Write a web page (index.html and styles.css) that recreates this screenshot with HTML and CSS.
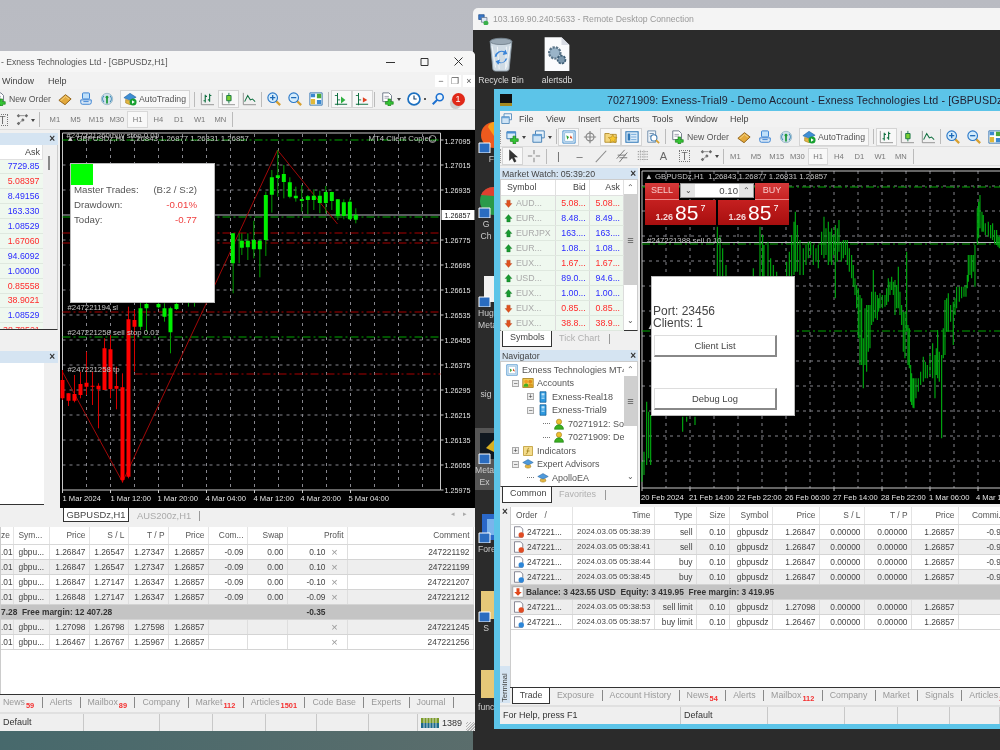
FILE: index.html
```html
<!DOCTYPE html>
<html lang="en">
<head>
    <meta charset="UTF-8">
    <title>MetaTrader copier on two desktops</title>
    <link rel="stylesheet" href="styles.css">
</head>
<body>
<svg class="sprite" xmlns="http://www.w3.org/2000/svg">
    <symbol id="i-new" viewBox="0 0 16 16"><path d="M1 2h10v8H1z" fill="#d8ecfa" stroke="#2a6fb0"/><path d="M1 2h10v2H1z" fill="#4a90d0"/><path d="M8 7h3v3h3v3h-3v3H8v-3H5v-3h3z" fill="#35c435" stroke="#127a12" stroke-width=".7"/></symbol>
    <symbol id="i-profile" viewBox="0 0 16 16"><path d="M4 1h10v8H4z" fill="#eef6fc" stroke="#3a78b0"/><path d="M1 5h10v9H1z" fill="#cfe4f6" stroke="#3a78b0"/><path d="M1 5h10v2H1z" fill="#6aa4d8"/></symbol>
    <symbol id="i-mw" viewBox="0 0 16 16"><path d="M1 1h14v14H1z" fill="#eaf4fc" stroke="#3a88c8"/><path d="M3 3h10v10H3z" fill="#fff" stroke="#8ab8dc"/><path d="M5 6l3 2-2 3z" fill="#2aa02a"/><path d="M10 6l2 4-3-1z" fill="#d24a20"/></symbol>
    <symbol id="i-cross" viewBox="0 0 16 16"><circle cx="8" cy="8" r="4.5" fill="none" stroke="#888" stroke-width="1.4"/><path d="M8 1v14M1 8h14" stroke="#888" stroke-width="1.4"/></symbol>
    <symbol id="i-star" viewBox="0 0 16 16"><path d="M1 4h5l1 1h7v9H1z" fill="#f4d67c" stroke="#b08a2a"/><path d="M10 5l1.500 3.200 3.500.4-2.600 2.400.7 3.500-3.100-1.800-3.100 1.800.7-3.500L5 8.600l3.500-.4z" fill="#f6c62e" stroke="#a67a10" stroke-width=".6"/></symbol>
    <symbol id="i-nav" viewBox="0 0 16 16"><path d="M1 2h14v12H1z" fill="#dcecf9" stroke="#2f78b8" stroke-width="1.200"/><path d="M3 4h3v8H3z" fill="#2f78b8"/><path d="M7 5h6M7 8h6M7 11h6" stroke="#6aa4d8"/></symbol>
    <symbol id="i-tester" viewBox="0 0 16 16"><path d="M2 1h9v13H2z" fill="#eef4fa" stroke="#6a8aa8"/><path d="M4 4h5M4 7h3" stroke="#6a8aa8"/><circle cx="9" cy="9" r="3.500" fill="#fff" stroke="#3a78b0" stroke-width="1.200"/><path d="M11.500 11.500 15 15" stroke="#d8a030" stroke-width="2"/></symbol>
    <symbol id="i-order" viewBox="0 0 16 16"><path d="M2 1h7l3 3v7H2z" fill="#fff" stroke="#667080"/><path d="M4 5h5M4 7h5" stroke="#99a"/><path d="M8 8h3v3h3v3h-3v2H8v-2H5v-3h3z" fill="#35c435" stroke="#127a12" stroke-width=".7"/></symbol>
    <symbol id="i-book" viewBox="0 0 16 16"><path d="M1 9.500 8.500 3 15 8l-7 6.500z" fill="#e3a93c" stroke="#8a5a10"/><path d="M3 10l5.500-5 4 3" fill="none" stroke="#f8dc90"/></symbol>
    <symbol id="i-person" viewBox="0 0 16 16"><rect x="4" y="1" width="8" height="7" rx="1" fill="#bfe0fa" stroke="#2a78d0"/><path d="M2 9h12v3a2 2 0 0 1-2 2H4a2 2 0 0 1-2-2z" fill="#dbe9f6" stroke="#2a78d0"/><path d="M5 11h6" stroke="#2a78d0"/></symbol>
    <symbol id="i-radio" viewBox="0 0 16 16"><circle cx="8" cy="8" r="6.500" fill="#cfe0ea" stroke="#9ab8c8"/><path d="M4.500 4.500a5 5 0 0 0 0 7M11.500 4.500a5 5 0 0 1 0 7" fill="none" stroke="#3a88b8" stroke-width="1.200"/><path d="M8 5v8" stroke="#1e9a3a" stroke-width="2"/><circle cx="8" cy="6" r="1.600" fill="#1e9a3a"/></symbol>
    <symbol id="i-hat" viewBox="0 0 16 16"><path d="M1 6.500 8 1.500l7 4.500-7 3.500z" fill="#3e8ed4" stroke="#1c5a94" stroke-width=".6"/><path d="M3 8.500v4l5 2 3-1v-5l-3 1.500z" fill="#e3b644" stroke="#9a7414" stroke-width=".6"/><circle cx="11.500" cy="11.500" r="4" fill="#18a030"/><path d="M10.300 9.500l3.200 2-3.200 2z" fill="#fff"/></symbol>
    <symbol id="i-bars" viewBox="0 0 16 16"><path d="M1.500 1v13.500H16" fill="none" stroke="#8a8a8a"/><path d="M6 3v9M4 10h2M6 5h2M11 2v9M9 9h2M11 4h2" fill="none" stroke="#107040" stroke-width="1.300"/></symbol>
    <symbol id="i-candle" viewBox="0 0 16 16"><path d="M1.500 1v13.500H16" fill="none" stroke="#8a8a8a"/><path d="M9 1v12" stroke="#107040"/><path d="M6.500 4h5v6h-5z" fill="#7bd030" stroke="#107040"/></symbol>
    <symbol id="i-line" viewBox="0 0 16 16"><path d="M1.500 1v13.500H16" fill="none" stroke="#8a8a8a"/><path d="M3 11 6.500 4l3 5 2.500-1 3 3" fill="none" stroke="#107040" stroke-width="1.200"/></symbol>
    <symbol id="i-zplus" viewBox="0 0 16 16"><path d="M10 10l5 5" stroke="#d8a030" stroke-width="2.600"/><circle cx="6.500" cy="6.500" r="5.500" fill="#d4ecfc" stroke="#2a78c8" stroke-width="1.300"/><path d="M3.500 6.500h6M6.500 3.500v6" stroke="#1e6ab8" stroke-width="1.500"/></symbol>
    <symbol id="i-zminus" viewBox="0 0 16 16"><path d="M10 10l5 5" stroke="#d8a030" stroke-width="2.600"/><circle cx="6.500" cy="6.500" r="5.500" fill="#d4ecfc" stroke="#2a78c8" stroke-width="1.300"/><path d="M3.500 6.500h6" stroke="#1e6ab8" stroke-width="1.500"/></symbol>
    <symbol id="i-grid" viewBox="0 0 16 16"><path d="M1 1h14v14H1z" fill="#fff" stroke="#2a6fb0"/><path d="M2 2h5v4H2zM9 9h5v5H9z" fill="#3a88d0"/><path d="M9 2h5v5H9z" fill="#4aa838"/><path d="M2 8h5v6H2z" fill="#e0b83a"/></symbol>
    <symbol id="i-shift" viewBox="0 0 16 16"><path d="M4 1v14M1 14h14" stroke="#107040" stroke-width="1.200"/><path d="M1 4h3M4 9h3" stroke="#107040"/><path d="M8 5l5 4-5 4z" fill="#30b040"/></symbol>
    <symbol id="i-scroll" viewBox="0 0 16 16"><path d="M4 1v14M1 14h14" stroke="#107040" stroke-width="1.200"/><path d="M1 4h3M4 9h3" stroke="#107040"/><path d="M9 6l5 3-5 3z" fill="#e04020"/></symbol>
    <symbol id="i-clock" viewBox="0 0 16 16"><circle cx="8" cy="8" r="6.800" fill="#fff" stroke="#1c70c0" stroke-width="2"/><path d="M8 4v4h3" fill="none" stroke="#14406c" stroke-width="1.300"/></symbol>
    <symbol id="i-mag" viewBox="0 0 16 16"><circle cx="10" cy="6" r="4" fill="#eaf4fc" stroke="#1c70d0" stroke-width="1.800"/><path d="M7 9l-5 5" stroke="#1c70d0" stroke-width="2.400"/></symbol>
    <symbol id="i-tools" viewBox="0 0 16 16"><path d="M2 3l2-2 2 2-2 2zM11 3l2-2 2 2-2 2zM7 8l2-2 2 2-2 2zM2 12l2-2 2 2-2 2z" fill="#666"/><path d="M4 3h7M4 12l5-4" stroke="#888"/></symbol>
    <symbol id="i-arrow" viewBox="0 0 16 16"><path d="M4 1v12l3-3 2.500 5 2-1-2.500-4.800h4z" fill="#333" stroke="#111" stroke-width=".5"/></symbol>
    <symbol id="i-plus" viewBox="0 0 16 16"><path d="M8 1v5M8 10v5M1 8h5M10 8h5" stroke="#888" stroke-width="1.200"/></symbol>
    <symbol id="i-trend" viewBox="0 0 16 16"><path d="M2 15 14 2" stroke="#8a8a8a" stroke-width="1.200"/></symbol>
    <symbol id="i-chan" viewBox="0 0 16 16"><path d="M2 11 11 1M5 15l9-11M3 7h9M5 10h9" stroke="#777" stroke-width="1.100"/></symbol>
    <symbol id="i-fib" viewBox="0 0 16 16"><path d="M2 3h12M2 6h12M2 9h12M2 12h12" stroke="#888" stroke-dasharray="1.500 1"/><path d="M5 1v13M9 1v13" stroke="#bbb" stroke-dasharray="1.500 1"/></symbol>
    <symbol id="i-acct" viewBox="0 0 16 16"><path d="M1 2h14v12H1z" fill="#f0c850" stroke="#a07810"/><circle cx="5.500" cy="6" r="2.500" fill="#f2a020"/><path d="M2 13c0-6 7-6 7 0z" fill="#42b020"/><circle cx="11" cy="6" r="2.500" fill="#e08a18"/><path d="M8 13c0-6 7-6 7 0z" fill="#d89a20"/></symbol>
    <symbol id="i-server" viewBox="0 0 16 16"><path d="M4 1h8v14H4z" fill="#2f9ae0" stroke="#145e94"/><path d="M6 3h4v3H6z" fill="#bfe4fa"/><path d="M6 8h4M6 10h4" stroke="#bfe4fa"/></symbol>
    <symbol id="i-user" viewBox="0 0 16 16"><circle cx="8" cy="5" r="3.500" fill="#f0c030" stroke="#a07810" stroke-width=".8"/><path d="M2 15c0-8 12-8 12 0z" fill="#3cb020" stroke="#157a10" stroke-width=".8"/></symbol>
    <symbol id="i-indi" viewBox="0 0 16 16"><path d="M2 2h12v12H2z" fill="#f4dc8c" stroke="#b8942a"/><path d="M9.500 4c-2 0-1.500 2-2 4s0 4-2.500 4M6 8h4" fill="none" stroke="#9a7a14"/></symbol>
    <symbol id="i-ea" viewBox="0 0 16 16"><path d="M1 6 8 2l7 4-7 3.500z" fill="#4f9adc" stroke="#1c5a94" stroke-width=".6"/><path d="M5 9c2 1 4 1 6 0l1 3c-2 2-6 2-8 0z" fill="#e3b644" stroke="#9a7414" stroke-width=".6"/></symbol>
    <symbol id="i-sell" viewBox="0 0 16 16"><path d="M2 1h8l3 3v11H2z" fill="#fff" stroke="#667"/><circle cx="11" cy="12" r="3.600" fill="#e04c24"/></symbol>
    <symbol id="i-buy" viewBox="0 0 16 16"><path d="M2 1h8l3 3v11H2z" fill="#fff" stroke="#667"/><circle cx="11" cy="12" r="3.600" fill="#2c86d8"/></symbol>
    <symbol id="i-bal" viewBox="0 0 16 16"><path d="M1 1h14v14H1z" fill="#fff" stroke="#999"/><path d="M6 3h4v5h3l-5 5-5-5h3z" fill="#e0481c"/></symbol>
    <symbol id="i-up" viewBox="0 0 16 16"><path d="M8 1l6 7h-3v6H5V8H2z" fill="#189a30" stroke="#0b6a1c" stroke-width=".6"/></symbol>
    <symbol id="i-down" viewBox="0 0 16 16"><path d="M8 15l6-7h-3V2H5v6H2z" fill="#e0521e" stroke="#a83410" stroke-width=".6"/></symbol>
    <symbol id="i-bin" viewBox="0 0 32 40"><path d="M4 6h24l-3 31a3 3 0 0 1-3 2H10a3 3 0 0 1-3-2z" fill="#cfdbe4" stroke="#8a98a4"/><ellipse cx="16" cy="6" rx="12" ry="3.500" fill="#9aa9b5" stroke="#75838e"/><path d="M6 11l4 24M12 12l2 25M22 12l-1 25M26 11l-4 24" stroke="#eef3f6" stroke-width="1.200"/><path d="M11 23a6 6 0 0 1 8-5l-1 3 5-1-2-5-1 2a8 8 0 0 0-11 6zM21 25a5 5 0 0 1-7 4l1-3-5 2 3 4 1-2a8 8 0 0 0 9-5z" fill="#3a84d8"/></symbol>
    <symbol id="i-doc" viewBox="0 0 24 32"><path d="M1 1h15l7 7v23H1z" fill="#fafbfd"/><path d="M16 1v7h7z" fill="#d8dce4"/><circle cx="10" cy="15" r="5" fill="#9ab4c8" stroke="#5a7488" stroke-width="2" stroke-dasharray="2 1"/><circle cx="16" cy="21" r="3.500" fill="#7c98ae" stroke="#3c5c74" stroke-width="1.500" stroke-dasharray="2 1"/></symbol>
</svg>

<div class="desktop">

    <!-- remote desktop window, behind the local terminal -->
    <section class="rdp">
        <div class="rdp-title">
            <svg class="rdp-logo" viewBox="0 0 16 16"><path d="M1 1h8v7H1z" fill="#3a78c8" stroke="#1c4a88"/><path d="M5 5h8v7H5z" fill="#dbe6f4" stroke="#5a6a80"/><path d="M8 12a4 4 0 0 1 7 0 3 3 0 0 1-7 2z" fill="#3ab04a"/></svg>
            <span>103.169.90.240:5633 - Remote Desktop Connection</span>
        </div>
        <div class="rdp-screen">
            <div class="icon icon-bin"><svg class="i32"><use href="#i-bin"/></svg><span>Recycle Bin</span></div>
            <div class="icon icon-alerts"><svg class="i32"><use href="#i-doc"/></svg><span>alertsdb</span></div>

            <div class="cut cut-fox"><svg viewBox="0 0 16 32"><circle cx="16" cy="14" r="13" fill="#ee5a1e"/><path d="M10 6c2-5 6-5 6-5v14z" fill="#f9a11b"/><path class="sc" d="M1 22h11v10H1z"/></svg><span>F</span></div>
            <div class="cut cut-chrome"><svg viewBox="0 0 16 32"><circle cx="16" cy="15" r="14" fill="#2a9a4a"/><path d="M3 9A14 14 0 0 1 16 1v9z" fill="#e04030"/><path class="sc" d="M1 22h11v10H1z"/></svg><span>G<br>Ch</span></div>
            <div class="cut cut-hug"><svg viewBox="0 0 16 32"><path d="M6 1h10v26H6z" fill="#f2f2f2"/><path class="sc" d="M1 22h11v10H1z"/></svg><span>Hug<br>Meta</span></div>
            <div class="cut cut-sig"><span>sig</span></div>
            <div class="cut cut-meta"><svg viewBox="0 0 16 32"><path d="M2 1h14v26H2z" fill="#101820"/><path d="M8 16l8-8v12z" fill="#d8b020"/><path class="sc" d="M1 22h11v10H1z"/></svg><span>Meta<br>Ex</span></div>
            <div class="cut cut-fore"><svg viewBox="0 0 16 32"><path d="M4 3h12v26H4z" fill="#2a68c8"/><path d="M9 8h7v16H9z" fill="#7ab4ec"/><path class="sc" d="M1 22h11v10H1z"/></svg><span>Fore</span></div>
            <div class="cut cut-s"><svg viewBox="0 0 16 32"><path d="M3 1h13v28H3z" fill="#e6c878"/><path class="sc" d="M1 22h11v10H1z"/></svg><span>S</span></div>
            <div class="cut cut-func"><svg viewBox="0 0 16 32"><path d="M3 1h13v28H3z" fill="#e6c878"/></svg><span>func</span></div>

            <!-- demo account terminal -->
            <div class="mt4">
                <div class="mt4-title">
                    <span class="mt4-logo"></span>
                    <span class="mt4-caption">70271909: Exness-Trial9 - Demo Account - Exness Technologies Ltd - [GBPUSDz</span>
                </div>
                <div class="mt4-inner">
                    <div class="menubar menubar-r">
                        <svg class="i16 menu-ico"><use href="#i-profile"/></svg>
                        <a class="m-file">File</a><a class="m-next">View</a><a class="m-next">Insert</a><a class="m-next">Charts</a><a class="m-next">Tools</a><a class="m-next">Window</a><a class="m-next">Help</a>
                    </div>
                    <div class="toolbar tb-r1">
                        <i class="grip"></i>
                        <b class="btn wide"><svg class="i14"><use href="#i-new"/></svg><em class="dd"></em></b>
                        <b class="btn wide"><svg class="i14"><use href="#i-profile"/></svg><em class="dd"></em></b>
                        <i class="sep"></i>
                        <b class="btn on"><svg class="i14"><use href="#i-mw"/></svg></b>
                        <b class="btn"><svg class="i14"><use href="#i-cross"/></svg></b>
                        <b class="btn on"><svg class="i14"><use href="#i-star"/></svg></b>
                        <b class="btn on"><svg class="i14"><use href="#i-nav"/></svg></b>
                        <b class="btn"><svg class="i14"><use href="#i-tester"/></svg></b>
                        <i class="sep"></i>
                        <b class="btn text neworder"><svg class="i14"><use href="#i-order"/></svg>New Order</b>
                        <b class="btn"><svg class="i14"><use href="#i-book"/></svg></b>
                        <b class="btn"><svg class="i14"><use href="#i-person"/></svg></b>
                        <b class="btn"><svg class="i14"><use href="#i-radio"/></svg></b>
                        <b class="btn text auto on"><svg class="i14"><use href="#i-hat"/></svg>AutoTrading</b>
                        <i class="sep"></i>
                        <b class="btn on"><svg class="i14"><use href="#i-bars"/></svg></b>
                        <b class="btn"><svg class="i14"><use href="#i-candle"/></svg></b>
                        <b class="btn"><svg class="i14"><use href="#i-line"/></svg></b>
                        <i class="sep"></i>
                        <b class="btn"><svg class="i14"><use href="#i-zplus"/></svg></b>
                        <b class="btn"><svg class="i14"><use href="#i-zminus"/></svg></b>
                        <b class="btn"><svg class="i14"><use href="#i-grid"/></svg></b>
                    </div>
                    <div class="toolbar tb-r2">
                        <i class="grip"></i>
                        <b class="btn on"><svg class="i14"><use href="#i-arrow"/></svg></b>
                        <b class="btn"><svg class="i14"><use href="#i-plus"/></svg></b>
                        <i class="sep"></i>
                        <b class="btn glyph">|</b>
                        <b class="btn glyph">&ndash;</b>
                        <b class="btn"><svg class="i14"><use href="#i-trend"/></svg></b>
                        <b class="btn"><svg class="i14"><use href="#i-chan"/></svg></b>
                        <b class="btn"><svg class="i14"><use href="#i-fib"/></svg></b>
                        <b class="btn glyph">A</b>
                        <b class="btn glyph boxed"><span>T</span></b>
                        <b class="btn wide"><svg class="i14"><use href="#i-tools"/></svg><em class="dd"></em></b>
                        <i class="sep"></i>
                        <span class="tf">M1</span><span class="tf">M5</span><span class="tf">M15</span><span class="tf">M30</span><span class="tf on">H1</span><span class="tf">H4</span><span class="tf">D1</span><span class="tf">W1</span><span class="tf">MN</span>
                        <i class="sep"></i>
                    </div>

                    <div class="mt4-main">
                        <aside class="side-r">
                            <div class="panel mw-r">
                                <div class="panel-head">Market Watch: 05:39:20<span class="close">&times;</span></div>
                                <div class="mw-body">
                                    <table class="mw-table">
                                        <tr><th class="c-sym">Symbol</th><th>Bid</th><th>Ask</th></tr>
                                        <tr class="dn"><td class="c-sym"><svg class="i8"><use href="#i-down"/></svg>AUD...</td><td>5.08...</td><td>5.08...</td></tr>
                                        <tr class="up"><td class="c-sym"><svg class="i8"><use href="#i-up"/></svg>EUR...</td><td>8.48...</td><td>8.49...</td></tr>
                                        <tr class="up"><td class="c-sym"><svg class="i8"><use href="#i-up"/></svg>EURJPX</td><td>163....</td><td>163....</td></tr>
                                        <tr class="up"><td class="c-sym"><svg class="i8"><use href="#i-up"/></svg>EUR...</td><td>1.08...</td><td>1.08...</td></tr>
                                        <tr class="dn"><td class="c-sym"><svg class="i8"><use href="#i-down"/></svg>EUX...</td><td>1.67...</td><td>1.67...</td></tr>
                                        <tr class="up"><td class="c-sym"><svg class="i8"><use href="#i-up"/></svg>USD...</td><td>89.0...</td><td>94.6...</td></tr>
                                        <tr class="up"><td class="c-sym"><svg class="i8"><use href="#i-up"/></svg>EUX...</td><td>1.00...</td><td>1.00...</td></tr>
                                        <tr class="dn"><td class="c-sym"><svg class="i8"><use href="#i-down"/></svg>EUX...</td><td>0.85...</td><td>0.85...</td></tr>
                                        <tr class="dn"><td class="c-sym"><svg class="i8"><use href="#i-down"/></svg>EUX...</td><td>38.8...</td><td>38.9...</td></tr>
                                    </table>
                                    <div class="vscroll mw-scroll"><u class="arr">&#8963;</u><u class="thumb">&equiv;</u><u class="arr arr-d">&#8964;</u></div>
                                </div>
                                <div class="subtabs"><span class="subtab active">Symbols</span><span class="subtab">Tick Chart</span><i class="vbar"></i></div>
                            </div>
                            <div class="panel nav-r">
                                <div class="panel-head">Navigator<span class="close">&times;</span></div>
                                <div class="nav-body">
                                    <div class="tree">
                                        <div class="node lv0"><svg class="i12"><use href="#i-mw"/></svg>Exness Technologies MT4</div>
                                        <div class="node lv1"><i class="exp">&minus;</i><svg class="i12"><use href="#i-acct"/></svg>Accounts</div>
                                        <div class="node lv2"><i class="exp">+</i><svg class="i12"><use href="#i-server"/></svg>Exness-Real18</div>
                                        <div class="node lv2"><i class="exp">&minus;</i><svg class="i12"><use href="#i-server"/></svg>Exness-Trial9</div>
                                        <div class="node lv3"><i class="dash"></i><svg class="i12"><use href="#i-user"/></svg>70271912: Sou</div>
                                        <div class="node lv3"><i class="dash"></i><svg class="i12"><use href="#i-user"/></svg>70271909: Des</div>
                                        <div class="node lv1"><i class="exp">+</i><svg class="i12"><use href="#i-indi"/></svg>Indicators</div>
                                        <div class="node lv1"><i class="exp">&minus;</i><svg class="i12"><use href="#i-ea"/></svg>Expert Advisors</div>
                                        <div class="node lv2"><i class="dash"></i><svg class="i12"><use href="#i-ea"/></svg>ApolloEA</div>
                                    </div>
                                    <div class="vscroll nav-scroll"><u class="arr">&#8963;</u><u class="thumb">&equiv;</u><u class="arr arr-d">&#8964;</u></div>
                                </div>
                                <div class="subtabs"><span class="subtab active">Common</span><span class="subtab">Favorites</span><i class="vbar"></i></div>
                            </div>
                        </aside>

                        <div class="chart chart-r">
                            <svg class="plot" viewBox="640 168 360 336">
                                <path class="grid" d="M666 171V488M690 171V488M714 171V488M738 171V488M762 171V488M786 171V488M810 171V488M834 171V488M858 171V488M882 171V488M906 171V488M930 171V488M954 171V488M978 171V488M642 186H1000M642 211H1000M642 236H1000M642 261H1000M642 286H1000M642 311H1000M642 336H1000M642 361H1000M642 386H1000M642 411H1000M642 436H1000M642 461H1000"/>
                                <path class="frame" d="M642 171V488H1000M642 171H1000M642 488V491M690 488V491M738 488V491M786 488V491M834 488V491M882 488V491M930 488V491M978 488V491"/>
                                <path class="level lv-green" d="M642 187H1000M642 331H1000M642 244H1000"/>
                                <path class="level-bid" d="M642 242.500H1000"/>
                                <g transform="translate(640 165) scale(.3333)">
                                    <path class="hl" d="M6 890V950M12 860V930M20 710V900M26 740V880M32 750V900M128 755V800M140 755V770M165 755V780M232 185V340M240 215V340M248 250V340M258 300V340M340 310V340M360 185V340M368 210V340M372 240V340M384 230V340M392 280V340M400 300V340M410 320V340M440 290V340M448 260V340M455 210V340M462 170V330M466 140V320M472 180V320M480 225V330M490 250V330M498 240V300M505 230V280M512 230V270M520 240V300M528 250V290M535 240V310M545 200V270M552 155V280M558 190V270M565 170V300M570 200V290M575 190V300M581 210V270M586 180V400M592 190V290M597 165V260M604 230V290M610 225V280M616 225V270M622 225V300M628 250V320M635 270V340M640 300V365M645 340V390M650 360V430M655 370V520M660 390V600M665 400V600M670 520V670M675 430V600M680 420V620M685 420V560M690 420V550M695 380V480M700 315V470M706 380V460M712 390V465M716 400V440M720 385V430M727 390V430M735 390V425M740 370V420M745 340V410M750 350V390M755 335V375M760 350V390M765 345V450M770 360V430M775 305V430M780 380V450M785 420V480M790 440V560M795 440V580M800 260V500M804 480V600M808 490V610M812 600V710M815 625V720M819 640V728M822 640V730M828 640V700M835 640V680M842 620V660M850 575V650M856 590V640M862 600V640M870 570V630M878 535V640M885 570V700M889 550V630M893 495V640M898 560V650M905 570V820M910 490V580M915 405V570M920 400V500M925 385V500M932 420V470M940 410V540M945 400V450M950 365V430M958 365V410M965 365V400M972 365V395M978 360V395M982 330V370M985 270V350M990 270V330M995 270V340M1000 270V320M1005 240V365M1012 130V240M1016 110V220M1020 90V190M1026 140V200M1030 150V200M1036 175V210M1045 170V215M1052 180V220M1058 175V225M1064 195V235M1070 195V240M1074 210V245M1078 215V250"/>
                                </g>
                                <text class="t-label" x="645" y="179">&#9650; GBPUSDz,H1  1.26843 1.26877 1.26831 1.26857</text>
                                <text class="t-label" x="647" y="243">#247221388 sell 0.10</text>
                                <text class="t-label" x="647" y="329">&#9650;</text>
                                <g class="t-axis">
                                    <text x="641" y="500">20 Feb 2024</text>
                                    <text x="689" y="500">21 Feb 14:00</text>
                                    <text x="737" y="500">22 Feb 22:00</text>
                                    <text x="785" y="500">26 Feb 06:00</text>
                                    <text x="833" y="500">27 Feb 14:00</text>
                                    <text x="881" y="500">28 Feb 22:00</text>
                                    <text x="929" y="500">1 Mar 06:00</text>
                                    <text x="976" y="500">4 Mar 1</text>
                                </g>
                            </svg>

                            <div class="oneclick">
                                <div class="oc-top">
                                    <span class="oc-side">SELL</span>
                                    <span class="oc-lot"><i class="oc-step">&#8964;</i><span class="oc-val">0.10</span><i class="oc-step">&#8963;</i></span>
                                    <span class="oc-side">BUY</span>
                                </div>
                                <div class="oc-prices">
                                    <span class="oc-price"><small>1.26</small><strong>85</strong><sup>7</sup></span>
                                    <span class="oc-price"><small>1.26</small><strong>85</strong><sup>7</sup></span>
                                </div>
                            </div>

                            <div class="copier">
                                <div class="copier-info">Port: 23456<br>Clients: 1</div>
                                <div class="win-btn">Client List</div>
                                <div class="win-btn win-btn-2">Debug Log</div>
                            </div>
                        </div>
                    </div>

                    <div class="terminal term-r">
                        <div class="term-strip"><span class="close">&times;</span><span class="term-name">Terminal</span></div>
                        <div class="term-main">
                            <div class="grid-wrap">
                                <table class="trades trades-r">
                                    <thead><tr><th class="order">Order &nbsp;&nbsp;/</th><th>Time</th><th>Type</th><th>Size</th><th>Symbol</th><th>Price</th><th>S / L</th><th>T / P</th><th>Price</th><th>Commi...</th></tr></thead>
                                    <tbody>
                                        <tr><td class="order"><svg class="i12"><use href="#i-sell"/></svg>247221...</td><td>2024.03.05 05:38:39</td><td>sell</td><td>0.10</td><td>gbpusdz</td><td>1.26847</td><td>0.00000</td><td>0.00000</td><td>1.26857</td><td>-0.90</td></tr>
                                        <tr class="alt"><td class="order"><svg class="i12"><use href="#i-sell"/></svg>247221...</td><td>2024.03.05 05:38:41</td><td>sell</td><td>0.10</td><td>gbpusdz</td><td>1.26847</td><td>0.00000</td><td>0.00000</td><td>1.26857</td><td>-0.90</td></tr>
                                        <tr><td class="order"><svg class="i12"><use href="#i-buy"/></svg>247221...</td><td>2024.03.05 05:38:44</td><td>buy</td><td>0.10</td><td>gbpusdz</td><td>1.26847</td><td>0.00000</td><td>0.00000</td><td>1.26857</td><td>-0.90</td></tr>
                                        <tr class="alt"><td class="order"><svg class="i12"><use href="#i-buy"/></svg>247221...</td><td>2024.03.05 05:38:45</td><td>buy</td><td>0.10</td><td>gbpusdz</td><td>1.26847</td><td>0.00000</td><td>0.00000</td><td>1.26857</td><td>-0.90</td></tr>
                                        <tr class="total"><td colspan="10"><svg class="i12"><use href="#i-bal"/></svg>Balance: 3 423.55 USD&nbsp; Equity: 3 419.95&nbsp; Free margin: 3 419.95</td></tr>
                                        <tr class="alt"><td class="order"><svg class="i12"><use href="#i-sell"/></svg>247221...</td><td>2024.03.05 05:38:53</td><td>sell limit</td><td>0.10</td><td>gbpusdz</td><td>1.27098</td><td>0.00000</td><td>0.00000</td><td>1.26857</td><td></td></tr>
                                        <tr><td class="order"><svg class="i12"><use href="#i-buy"/></svg>247221...</td><td>2024.03.05 05:38:57</td><td>buy limit</td><td>0.10</td><td>gbpusdz</td><td>1.26467</td><td>0.00000</td><td>0.00000</td><td>1.26857</td><td></td></tr>
                                    </tbody>
                                </table>
                            </div>
                            <div class="tabs tabs-r">
                                <span class="tab active">Trade</span><span class="tab">Exposure</span><span class="tab">Account History</span><span class="tab">News<sub>54</sub></span><span class="tab">Alerts</span><span class="tab">Mailbox<sub>112</sub></span><span class="tab">Company</span><span class="tab">Market</span><span class="tab">Signals</span><span class="tab">Articles<sub>2</sub></span>
                            </div>
                        </div>
                    </div>

                    <div class="status status-r">
                        <span>For Help, press F1</span><span>Default</span><span></span><span></span><span></span><span></span>
                    </div>
                </div>
            </div>
        </div>
    </section>

    <!-- local terminal, cut by the left edge of the screen -->
    <section class="local">
        <div class="local-title">
            <span>- Exness Technologies Ltd - [GBPUSDz,H1]</span>
            <span class="caps">
                <svg viewBox="0 0 12 12"><path d="M1 6.500h9"/></svg>
                <svg viewBox="0 0 12 12"><path d="M2 2.500h7v7H2z"/></svg>
                <svg viewBox="0 0 12 12"><path d="M1.500 1.500l8 8M9.500 1.500l-8 8"/></svg>
            </span>
        </div>
        <div class="menubar menubar-l">
            <a>Window</a><a>Help</a>
            <span class="mdi"><u>&minus;</u><u>&#10064;</u><u>&times;</u></span>
        </div>
        <div class="toolbar tb-l1">
            <svg class="i14 order-cut"><use href="#i-order"/></svg>
            <b class="btn text neworder-l">New Order</b>
            <b class="btn"><svg class="i14"><use href="#i-book"/></svg></b>
            <b class="btn"><svg class="i14"><use href="#i-person"/></svg></b>
            <b class="btn"><svg class="i14"><use href="#i-radio"/></svg></b>
            <b class="btn text auto on"><svg class="i14"><use href="#i-hat"/></svg>AutoTrading</b>
            <i class="sep"></i>
            <b class="btn"><svg class="i14"><use href="#i-bars"/></svg></b>
            <b class="btn on"><svg class="i14"><use href="#i-candle"/></svg></b>
            <b class="btn"><svg class="i14"><use href="#i-line"/></svg></b>
            <i class="sep"></i>
            <b class="btn"><svg class="i14"><use href="#i-zplus"/></svg></b>
            <b class="btn"><svg class="i14"><use href="#i-zminus"/></svg></b>
            <b class="btn"><svg class="i14"><use href="#i-grid"/></svg></b>
            <i class="sep"></i>
            <b class="btn on"><svg class="i14"><use href="#i-shift"/></svg></b>
            <b class="btn on"><svg class="i14"><use href="#i-scroll"/></svg></b>
            <i class="sep"></i>
            <b class="btn wide"><svg class="i14"><use href="#i-order"/></svg><em class="dd"></em></b>
            <b class="btn wide"><svg class="i14"><use href="#i-clock"/></svg><em class="dot"></em></b>
            <b class="btn narrow"><svg class="i14"><use href="#i-mag"/></svg></b>
            <span class="notify">1</span>
        </div>
        <div class="toolbar tb-l2">
            <b class="btn glyph boxed cut-t"><span>T</span></b>
            <b class="btn wide"><svg class="i14"><use href="#i-tools"/></svg><em class="dd"></em></b>
            <i class="sep"></i>
            <span class="tf">M1</span><span class="tf">M5</span><span class="tf">M15</span><span class="tf">M30</span><span class="tf on">H1</span><span class="tf">H4</span><span class="tf">D1</span><span class="tf">W1</span><span class="tf">MN</span>
            <i class="sep"></i>
        </div>

        <div class="local-main">
            <aside class="side-l">
                <div class="panel mw-l">
                    <div class="panel-head"><span class="close">&times;</span></div>
                    <div class="mw-body">
                        <table class="mw-table mw-table-l">
                            <tr><th>Ask</th></tr>
                            <tr class="up"><td>7729.85</td></tr>
                            <tr class="dn"><td>5.08397</td></tr>
                            <tr class="up"><td>8.49156</td></tr>
                            <tr class="up"><td>163.330</td></tr>
                            <tr class="up"><td>1.08529</td></tr>
                            <tr class="dn"><td>1.67060</td></tr>
                            <tr class="up"><td>94.6092</td></tr>
                            <tr class="up"><td>1.00000</td></tr>
                            <tr class="dn"><td>0.85558</td></tr>
                            <tr class="dn"><td>38.9021</td></tr>
                            <tr class="up"><td>1.08529</td></tr>
                            <tr class="dn"><td>38.78521</td></tr>
                        </table>
                        <i class="thumb-l"></i>
                    </div>
                </div>
                <div class="panel nav-l">
                    <div class="panel-head"><span class="close">&times;</span></div>
                    <div class="nav-body-l"></div>
                </div>
            </aside>

            <div class="chart-col">
                <div class="chart chart-l">
                    <svg class="plot" viewBox="60 130 414 378">
                        <path class="grid" d="M86 134V490M110 134V490M134 134V490M158 134V490M182 134V490M206 134V490M230 134V490M254 134V490M278 134V490M302 134V490M326 134V490M350 134V490M374 134V490M398 134V490M422 134V490M62 165H440M62 190H440M62 240H440M62 265H440M62 290H440M62 315H440M62 340H440M62 365H440M62 390H440M62 415H440M62 440H440M62 465H440"/>
                        <path class="frame" d="M440 133V490H62V133H440M440 140H443M440 165H443M440 190H443M440 240H443M440 265H443M440 290H443M440 315H443M440 340H443M440 365H443M440 390H443M440 415H443M440 440H443M440 465H443M440 490H443M62 490V493M110 490V493M158 490V493M206 490V493M254 490V493M302 490V493M350 490V493"/>
                        <path class="level lv-green" d="M62 140H440M62 217H440M62 337H440"/>
                        <path class="level lv-red" d="M62 233H440M62 243H440M62 312H440M134 374H440"/>
                        <path class="level-bid" d="M62 215H440"/>
                        <path class="zigzag" d="M62 372 122 482 205 305 277 150 337 224"/>
                        <g transform="translate(60 290) scale(.3333)">
                            <path class="wick-r" d="M6 240V330M24 310V348M42 255V337M60 245V325M78 185V315M96 245V345M114 280V415M132 145V300M150 135V325M168 230V358M186 250V578M204 50V565M222 60V245"/>
                            <path class="body-r" d="M6 270V325M24 310V332M42 312V332M60 282V315M78 278V290M96 287V290M114 287V298M132 175V300M150 178V297M168 288V296M186 292V570M204 88V560M222 90V110"/>
                            <path class="wick-g" d="M240 20V120M258 30V125M294 30V55M312 40V95M330 50V190M348 30V60M384 30V50M402 30V50"/>
                            <path class="body-g" d="M240 55V110M258 42V55M294 42V52M312 55V80M330 55V127M348 42V57"/>
                        </g>
                        <g transform="translate(240 130) scale(.3333)">
                            <path class="wick-g" d="M-22 310V490M-4 310V400M4 310V375M22 310V390M40 272V385M58 330V442M76 185V378M94 120V248M112 60V200M130 105V205M148 142V205M166 170V215M184 165V245M202 195V253M220 178V240M238 182V250M256 168V250M274 185V240M292 207V270M310 208V268M328 206V270M346 235V280"/>
                            <path class="body-g" d="M-23 310V400M4 332V353M22 332V352M40 330V358M58 332V358M76 195V330M94 142V194M112 136V144M130 132V156M148 157V200M166 197V205M184 207V213M202 199V210M220 197V210M238 197V219M256 186V219M274 186V213M292 208V258M310 217V258M328 215V268M346 254V269"/>
                        </g>
                        <text class="t-label" x="66" y="138">#247221260 buy stop 0.01</text>
                        <text class="t-label" x="66" y="141">&#9650; GBPUSDz,H1  1.26843 1.26877 1.26831 1.26857</text>
                        <text class="t-label" x="368" y="141">MT4 Client Copier</text>
                        <text class="t-label" x="67" y="310">#247221194 sl</text>
                        <text class="t-label" x="67" y="335">#247221258 sell stop 0.01</text>
                        <text class="t-label" x="67" y="372">#247221258 tp</text>
                        <circle class="smile" cx="432" cy="139" r="3.500"/>
                        <path class="smile" d="M430 140a2.200 2.200 0 0 0 4 0"/>
                        <g class="t-price">
                            <text x="444" y="144">1.27095</text>
                            <text x="444" y="168">1.27015</text>
                            <text x="444" y="193">1.26935</text>
                            <text x="444" y="243">1.26775</text>
                            <text x="444" y="268">1.26695</text>
                            <text x="444" y="293">1.26615</text>
                            <text x="444" y="318">1.26535</text>
                            <text x="444" y="343">1.26455</text>
                            <text x="444" y="368">1.26375</text>
                            <text x="444" y="393">1.26295</text>
                            <text x="444" y="418">1.26215</text>
                            <text x="444" y="443">1.26135</text>
                            <text x="444" y="468">1.26055</text>
                            <text x="444" y="493">1.25975</text>
                        </g>
                        <g class="t-axis">
                            <text x="62" y="501">1 Mar 2024</text>
                            <text x="110" y="501">1 Mar 12:00</text>
                            <text x="157" y="501">1 Mar 20:00</text>
                            <text x="205" y="501">4 Mar 04:00</text>
                            <text x="253" y="501">4 Mar 12:00</text>
                            <text x="300" y="501">4 Mar 20:00</text>
                            <text x="348" y="501">5 Mar 04:00</text>
                        </g>
                        <path class="bid-tag" d="M441 210h33v10h-33z"/>
                        <text class="t-bid" x="444" y="218">1.26857</text>
                    </svg>
                    <div class="drawdown">
                        <span class="flag"></span>
                        <div class="dd-grid">
                            <span>Master Trades:</span><span>(B:2 / S:2)</span>
                            <span>Drawdown:</span><span class="neg">-0.01%</span>
                            <span>Today:</span><span class="neg">-0.77</span>
                        </div>
                    </div>
                </div>
                <div class="chart-tabs">
                    <span class="ctab active">GBPUSDz,H1</span><span class="ctab">AUS200z,H1</span><i class="vbar"></i>
                    <span class="ctab-arrows"><u>&#9666;</u><u>&#9656;</u></span>
                </div>
            </div>
        </div>

        <div class="terminal term-l">
            <div class="grid-wrap">
                <table class="trades trades-l">
                    <thead><tr><th>ze</th><th class="lft">Sym...</th><th>Price</th><th>S / L</th><th>T / P</th><th>Price</th><th>Com...</th><th>Swap</th><th>Profit</th><th>Comment</th></tr></thead>
                    <tbody>
                        <tr><td>.01</td><td class="lft">gbpu...</td><td>1.26847</td><td>1.26547</td><td>1.27347</td><td>1.26857</td><td>-0.09</td><td>0.00</td><td>0.10<u class="x">&times;</u></td><td>247221192</td></tr>
                        <tr class="alt"><td>.01</td><td class="lft">gbpu...</td><td>1.26847</td><td>1.26547</td><td>1.27347</td><td>1.26857</td><td>-0.09</td><td>0.00</td><td>0.10<u class="x">&times;</u></td><td>247221199</td></tr>
                        <tr><td>.01</td><td class="lft">gbpu...</td><td>1.26847</td><td>1.27147</td><td>1.26347</td><td>1.26857</td><td>-0.09</td><td>0.00</td><td>-0.10<u class="x">&times;</u></td><td>247221207</td></tr>
                        <tr class="alt"><td>.01</td><td class="lft">gbpu...</td><td>1.26848</td><td>1.27147</td><td>1.26347</td><td>1.26857</td><td>-0.09</td><td>0.00</td><td>-0.09<u class="x">&times;</u></td><td>247221212</td></tr>
                        <tr class="total"><td colspan="8" class="total-text">7.28&nbsp; Free margin: 12 407.28</td><td>-0.35<u class="x"></u></td><td></td></tr>
                        <tr class="alt"><td>.01</td><td class="lft">gbpu...</td><td>1.27098</td><td>1.26798</td><td>1.27598</td><td>1.26857</td><td></td><td></td><td><u class="x">&times;</u></td><td>247221245</td></tr>
                        <tr><td>.01</td><td class="lft">gbpu...</td><td>1.26467</td><td>1.26767</td><td>1.25967</td><td>1.26857</td><td></td><td></td><td><u class="x">&times;</u></td><td>247221256</td></tr>
                    </tbody>
                </table>
            </div>
            <div class="tabs tabs-l">
                <span class="tab">News<sub>59</sub></span><span class="tab">Alerts</span><span class="tab">Mailbox<sub>89</sub></span><span class="tab">Company</span><span class="tab">Market<sub>112</sub></span><span class="tab">Articles<sub>1501</sub></span><span class="tab">Code Base</span><span class="tab">Experts</span><span class="tab">Journal</span>
            </div>
        </div>

        <div class="status status-l">
            <span>Default</span><span></span><span></span><span></span><span></span><span></span><span></span>
            <span class="conn"><svg class="conn-bars" viewBox="0 0 18 10"><path class="cb-g" d="M0 0h18v5H0z"/><path class="cb-b" d="M0 5h18v5H0z"/><path class="cb-k" d="M3 0v10M6 0v10M9 0v10M12 0v10M15 0v10"/></svg>1389</span>
        </div>
    </section>
</div>
</body>
</html>
```

FILE: styles.css
```css
* {
    box-sizing: border-box;
}

html, body {
    margin: 0;
    padding: 0;
    background: #444;
}

body {
    font-family: "Liberation Sans", Arial, sans-serif;
    font-size: 8.6px;
    color: #444;
    overflow: hidden;
}

.sprite {
    position: absolute;
    width: 0;
    height: 0;
}

.i8 { width: 9px; height: 9px; flex: none; }
.i12 { width: 12px; height: 12px; flex: none; }
.i14 { width: 14px; height: 14px; flex: none; }
.i16 { width: 16px; height: 16px; flex: none; }
.i32 { width: 30px; height: 36px; }

.desktop {
    position: relative;
    width: 1000px;
    height: 750px;
    overflow: hidden;
    filter: blur(0.5px);
    background:
        linear-gradient(90deg, #47696c 0%, #6f716b 100%) left bottom / 100% 40px no-repeat,
        linear-gradient(180deg, #b9bbc2, #c9cbd0) ;
}

/* remote desktop */

.rdp {
    position: absolute;
    left: 473px;
    top: 8px;
    right: 0;
    bottom: 0;
    display: flex;
    flex-direction: column;
}

.rdp-title {
    height: 22px;
    flex: none;
    display: flex;
    align-items: center;
    gap: 4px;
    padding-left: 5px;
    background: #f4f4f4;
    border-radius: 5px 0 0 0;
    font-size: 8.7px;
    color: #999;
}

.rdp-logo {
    width: 11px;
    height: 11px;
}

.rdp-screen {
    position: relative;
    flex: 1;
    background: #2b2b2b;
    overflow: hidden;
}

.icon {
    position: absolute;
    top: 6px;
    width: 48px;
    display: flex;
    flex-direction: column;
    align-items: center;
    gap: 3px;
    color: #ddd;
    font-size: 8.6px;
    white-space: nowrap;
}

.icon-bin { left: 4px; }
.icon-alerts { left: 60px; }

.cut {
    position: absolute;
    left: 5px;
    width: 16px;
    height: 60px;
    color: #ccc;
    font-size: 8.6px;
    line-height: 12px;
    text-align: center;
    overflow: hidden;
    white-space: nowrap;
}

.cut svg {
    display: block;
    width: 16px;
    height: 32px;
}

.cut .sc { fill: #2a6cc0; stroke: #fff; }

.cut-fox { top: 91px; text-align: right; }
.cut-chrome { top: 156px; }
.cut-hug { top: 245px; }
.cut-sig { top: 358px; }
.cut-sig span { display: block; }
.cut-meta { top: 398px; left: 2px; width: 19px; background: #555; height: 62px; padding-top: 4px; }
.cut-meta svg { margin-left: 3px; }
.cut-fore { top: 481px; }
.cut-s { top: 560px; }
.cut-func { top: 639px; }

/* demo terminal window */

.mt4 {
    position: absolute;
    left: 21px;
    top: 59px;
    width: 506px;
    height: 640px;
    background: #5cc4e8;
    padding: 0 0 5px 6px;
    display: flex;
    flex-direction: column;
    overflow: hidden;
}

.mt4-title {
    height: 22px;
    flex: none;
    display: flex;
    align-items: center;
    margin-left: -6px;
    color: #223;
    font-size: 10.7px;
    white-space: nowrap;
    letter-spacing: 0.1px;
}

.mt4-logo {
    width: 12px;
    height: 12px;
    flex: none;
    margin-left: 6px;
    background: #111;
    border-bottom: 3px solid #a58a20;
}

.mt4-caption {
    margin-left: 95px;
}

.mt4-inner {
    flex: 1;
    display: flex;
    flex-direction: column;
    background: #f0f0f0;
    min-height: 0;
}

.menubar {
    flex: none;
    position: relative;
    display: flex;
    align-items: center;
    font-size: 9px;
    color: #444;
    background: #f2f2f2;
}

.menubar-r {
    height: 16px;
}

.menu-ico {
    width: 12px;
    height: 12px;
    margin-left: 1px;
}

.m-file { margin-left: 6px; }
.m-next { margin-left: 12.5px; }

.toolbar {
    flex: none;
    display: flex;
    align-items: center;
    background: #f0f0f0;
    border-bottom: 1px solid #dcdcdc;
    white-space: nowrap;
    font-size: 9px;
    color: #555;
}

.tb-r1 { height: 20px; }
.tb-r2 { height: 19px; }

.grip {
    width: 2px;
    height: 14px;
    flex: none;
    border-left: 1px dotted #999;
}

.sep {
    width: 1px;
    height: 15px;
    margin: 0 1.5px;
    background: #bbb;
    flex: none;
}

.btn {
    width: 21px;
    height: 18px;
    flex: none;
    display: flex;
    align-items: center;
    justify-content: center;
    font-weight: normal;
    border: 1px solid transparent;
}

.btn.on {
    background: #f8f8f8;
    border-color: #d4d4d4;
}

.btn.wide {
    width: 26px;
    gap: 2px;
    padding-left: 2px;
}

.btn.narrow { width: 18px; }

.btn.glyph {
    font-size: 11px;
    color: #666;
}

.btn.boxed span {
    width: 11px;
    height: 12px;
    line-height: 11px;
    text-align: center;
    border: 1px dotted #777;
    font-size: 10px;
}

.btn.text {
    width: auto;
    gap: 2px;
    font-size: 8.7px;
}

.neworder { padding: 0 3px 0 3px; }
.auto { padding: 0 3px; width: 70px !important; margin: 0 3px 0 2.5px; }

.dd {
    width: 0;
    height: 0;
    border: 2.5px solid transparent;
    border-top: 3px solid #444;
    margin-top: 3px;
}

.dot {
    width: 2px;
    height: 2px;
    background: #555;
    margin-left: 1px;
}

.tf {
    width: 20.7px;
    height: 17px;
    line-height: 15px;
    flex: none;
    text-align: center;
    font-size: 7.6px;
    color: #777;
    border: 1px solid transparent;
}

.tf.on {
    background: #f8f8f8;
    border-color: #d8d8d8;
}

.mt4-main {
    flex: none;
    height: 338px;
    display: flex;
    gap: 2px;
}

.side-r {
    width: 138px;
    flex: none;
    display: flex;
    flex-direction: column;
    gap: 2px;
    padding-top: 2px;
}

.panel {
    display: flex;
    flex-direction: column;
}

.panel-head {
    height: 11px;
    flex: none;
    display: flex;
    align-items: center;
    justify-content: space-between;
    padding: 0 2px;
    background: #d5e4f2;
    font-size: 8.8px;
    color: #444;
    white-space: nowrap;
}

.close {
    font-size: 10px;
    font-weight: bold;
    color: #333;
    line-height: 10px;
}

.mw-r {
    height: 180px;
    flex: none;
}

.mw-body {
    position: relative;
    display: flex;
    flex: 1;
    min-height: 0;
    background: #fff;
    border: 1px solid #ccc;
    border-bottom-color: #333;
}

.mw-table {
    border-collapse: collapse;
    table-layout: fixed;
    flex: 1;
    height: 0;
}

.mw-table th {
    height: 15px;
    font-weight: normal;
    text-align: right;
    padding: 0 3px;
    color: #444;
    border-right: 1px solid #e0e0e0;
    border-bottom: 1px solid #e0e0e0;
    font-size: 8.8px;
}

.mw-table td {
    height: 15px;
    padding: 0 3px;
    text-align: right;
    white-space: nowrap;
    overflow: hidden;
    background: #eff8ef;
    border-bottom: 1px solid #dfe8df;
    border-right: 1px solid #dcdcdc;
    font-size: 8.8px;
}

.mw-table .c-sym {
    text-align: left;
    width: 54px;
    color: #aaa;
}

.mw-table th.c-sym { color: #444; padding-left: 6px; }

.mw-table .c-sym .i8 {
    vertical-align: -2px;
    margin-right: 3px;
}

.up td { color: #2a2aff; }
.dn td { color: #ff2a2a; }
.up td.c-sym, .dn td.c-sym { color: #aaa; }

.vscroll {
    width: 13px;
    flex: none;
    display: flex;
    flex-direction: column;
    background: #fff;
    color: #555;
    text-align: center;
    font-size: 8px;
}

.vscroll u {
    text-decoration: none;
    display: block;
}

.arr { height: 14px; line-height: 16px; }
.arr-d { margin-top: auto; line-height: 10px; }

.thumb {
    background: #cfcfcf;
    font-size: 11px;
    display: flex !important;
    align-items: center;
    justify-content: center;
}

.mw-scroll .thumb { height: 91px; }
.nav-scroll .thumb { height: 50px; }

.subtabs {
    height: 17px;
    flex: none;
    display: flex;
    align-items: flex-start;
    font-size: 9px;
    color: #b0b0b0;
    background: #f0f0f0;
}

.subtab {
    padding: 2px 7px;
    height: 16px;
}

.subtab.active {
    margin-left: 2px;
    background: #fff;
    color: #444;
    border: 1px solid #333;
    border-top: none;
    padding: 1px 7px;
    width: 50px;
}

.vbar {
    width: 1px;
    height: 10px;
    background: #999;
    margin-top: 3px;
    margin-left: 2px;
}

.nav-r {
    flex: 1;
    min-height: 0;
}

.nav-body {
    flex: 1;
    display: flex;
    min-height: 0;
    background: #fff;
    border: 1px solid #ccc;
    border-bottom-color: #333;
    overflow: hidden;
}

.tree {
    flex: 1;
    min-width: 0;
    overflow: hidden;
    padding-top: 1px;
    font-size: 9px;
    color: #555;
    white-space: nowrap;
}

.node {
    height: 13.5px;
    display: flex;
    align-items: center;
    gap: 3px;
}

.lv0 { padding-left: 5px; gap: 4px; }
.lv1 { padding-left: 11px; }
.lv2 { padding-left: 26px; }
.lv3 { padding-left: 42px; }

.exp {
    width: 7px;
    height: 7px;
    flex: none;
    font-style: normal;
    font-size: 7px;
    line-height: 5px;
    text-align: center;
    border: 1px solid #aaa;
    background: #eee;
    color: #333;
}

.dash {
    width: 7px;
    flex: none;
    border-top: 1px dotted #777;
}

.chart {
    position: relative;
    background: #000;
    overflow: hidden;
}

.chart-r {
    flex: 1;
    margin-top: 2px;
}

.plot {
    display: block;
    width: 100%;
    height: 100%;
}

.plot path {
    fill: none;
}

.grid {
    stroke: #85858c;
    stroke-width: 1;
    stroke-dasharray: 3 4;
}

.frame {
    stroke: #c8c8c8;
    stroke-width: 1;
}

.level {
    stroke-width: 1;
    stroke-dasharray: 8 3 2 3;
}

.lv-green { stroke: #00a800; }
.lv-red { stroke: #a80000; }
.level-bid { stroke: #b8b8c0; }

.zigzag { stroke: #a00808; stroke-width: 1; }

.hl { stroke: #00ac10; stroke-width: 3.4; }

.wick-r { stroke: #d80000; stroke-width: 3; }
.body-r { stroke: #ff0000; stroke-width: 12; }
.wick-g { stroke: #00a000; stroke-width: 3; }
.body-g { stroke: #00f000; stroke-width: 12; }

.t-label, .t-axis text, .t-price text, .t-bid {
    font-family: "Liberation Sans", Arial, sans-serif;
    font-size: 7.6px;
    fill: #e4e4e4;
    white-space: pre;
}

.t-label { fill: #c4c4c4; font-size: 7.8px; }
.t-price text, .t-bid { font-size: 7.2px; }
.t-bid { fill: #111; }
.plot .bid-tag { fill: #fff; }
.plot .smile, .smile { fill: none; stroke: #c4c4c4; stroke-width: .8; }

/* one click trading */

.oneclick {
    position: absolute;
    left: 5px;
    top: 15px;
    width: 144px;
}

.oc-top {
    display: flex;
    justify-content: space-between;
    height: 17px;
}

.oc-side {
    width: 34px;
    background: linear-gradient(#d63a3a, #c52222);
    color: #f6caca;
    font-size: 9px;
    text-align: center;
    line-height: 15px;
    border-bottom: 1px solid #e88;
}

.oc-lot {
    width: 74px;
    height: 15px;
    display: flex;
    align-items: center;
    background: #fff;
    border: 1px solid #999;
    color: #444;
    font-size: 9.6px;
}

.oc-step {
    width: 14px;
    height: 100%;
    background: #e4e4e4;
    font-style: normal;
    text-align: center;
    line-height: 14px;
    font-size: 8px;
}

.oc-val {
    flex: 1;
    text-align: right;
    padding-right: 1px;
}

.oc-prices {
    display: flex;
    justify-content: space-between;
}

.oc-price {
    width: 71px;
    height: 25px;
    display: flex;
    justify-content: center;
    align-items: baseline;
    color: #fff;
    background: linear-gradient(#c52020, #a80f0f);
    line-height: 25px;
}

.oc-price small {
    font-size: 9px;
    font-weight: bold;
    color: #f4d8d8;
    margin-right: 2px;
}

.oc-price strong {
    font-size: 21px;
    font-weight: normal;
}

.oc-price sup {
    font-size: 9px;
    line-height: 9px;
    align-self: flex-start;
    margin-top: 4px;
    margin-left: 2px;
}

/* copier panels, drawn by the EA on top of the chart */

.copier {
    position: absolute;
    left: 11px;
    top: 108px;
    width: 144px;
    height: 140px;
    background: #fff;
    border: 1px solid #bbb;
    font-size: 12px;
    color: #444;
}

.copier-info {
    margin: 29px 0 0 1px;
    line-height: 11.5px;
}

.win-btn {
    margin: 6px 0 0 2px;
    width: 123px;
    height: 22px;
    text-align: center;
    line-height: 19px;
    font-size: 9.4px;
    background: #fff;
    color: #444;
    border: 1px solid #ddd;
    border-right: 2px solid #888;
    border-bottom: 2px solid #888;
}

.win-btn-2 {
    margin-top: 31px;
}

.drawdown {
    position: absolute;
    left: 10px;
    top: 33px;
    width: 145px;
    height: 140px;
    background: #fff;
    border: 1px solid #bbb;
    font-size: 9.7px;
    color: #555;
}

.flag {
    display: block;
    width: 22px;
    height: 21px;
    background: #0f0;
}

.dd-grid {
    display: grid;
    grid-template-columns: 1fr auto;
    row-gap: 3px;
    margin-top: -1px;
    padding: 0 17px 0 3px;
    line-height: 12px;
}

.dd-grid span:nth-child(even) {
    text-align: right;
}

.neg {
    color: #f04040;
}

/* terminal tables */

.terminal {
    display: flex;
}

.term-r {
    height: 198px;
    flex: none;
    margin-top: 3px;
}

.term-strip {
    width: 10px;
    flex: none;
    display: flex;
    flex-direction: column;
    justify-content: space-between;
    background: #f0f0f0;
    text-align: center;
}

.term-name {
    height: 37px;
    margin-bottom: 2px;
    writing-mode: vertical-rl;
    transform: rotate(180deg);
    background: #d5e4f2;
    font-size: 7.6px;
    line-height: 10px;
    text-align: left;
    padding-top: 1px;
}

.term-main {
    flex: 1;
    min-width: 0;
    display: flex;
    flex-direction: column;
}

.grid-wrap {
    flex: 1;
    background: #fff;
    overflow: hidden;
    border-left: 1px solid #ccc;
}

.trades {
    table-layout: fixed;
    border-collapse: collapse;
    white-space: nowrap;
    font-size: 8.4px;
    color: #444;
}

.trades th {
    height: 17px;
    font-weight: normal;
    text-align: right;
    padding: 0 3px;
    color: #555;
    border-right: 1px solid #e4e4e4;
    border-bottom: 1px solid #d8d8d8;
    background: #fff;
    overflow: hidden;
}

.trades td {
    height: 15px;
    padding: 0 3px 0 1px;
    text-align: right;
    border-right: 1px solid #dedede;
    border-bottom: 1px solid #d4d4d4;
    overflow: hidden;
}

.trades .alt td {
    background: #eeeeee;
}

.trades .total td {
    background: #c4c4c4;
    font-weight: bold;
    text-align: left;
    color: #333;
    border-right-color: #c4c4c4;
}

.trades-l { width: 472px; }
.trades-l th:nth-child(1) { width: 12px; }
.trades-l th:nth-child(2) { width: 36px; }
.trades-l th:nth-child(3) { width: 40px; }
.trades-l th:nth-child(4) { width: 39px; }
.trades-l th:nth-child(5) { width: 40px; }
.trades-l th:nth-child(6) { width: 40px; }
.trades-l th:nth-child(7) { width: 39px; }
.trades-l th:nth-child(8) { width: 40px; }
.trades-l th:nth-child(9) { width: 60px; }
.trades-l th:nth-child(10) { width: 126px; }

.trades-l th:nth-child(1), .trades-l td:nth-child(1) {
    padding: 0 3px 0 0;
}

.trades-l .lft { text-align: left; padding-left: 5px; }
.trades-l .total td.total-text { padding-left: 0; }
.trades-l .total td:nth-child(2) { text-align: right; }

.x {
    display: inline-block;
    width: 18px;
    text-decoration: none;
    text-align: center;
    color: #999;
    font-size: 11px;
    line-height: 10px;
    font-weight: normal;
    vertical-align: -1px;
}

.trades-r { width: 498px; }
.trades-r th:nth-child(1) { width: 61px; }
.trades-r th:nth-child(2) { width: 82px; }
.trades-r th:nth-child(3) { width: 42px; }
.trades-r th:nth-child(4) { width: 33px; }
.trades-r th:nth-child(5) { width: 43px; }
.trades-r th:nth-child(6) { width: 47px; }
.trades-r th:nth-child(7) { width: 45px; }
.trades-r th:nth-child(8) { width: 47px; }
.trades-r th:nth-child(9) { width: 47px; }
.trades-r th:nth-child(10) { width: 51px; }

.trades-r td:nth-child(2) { font-size: 8px; }

.trades-r .order {
    text-align: left;
    padding-left: 2px;
}

.trades-r th.order { padding-left: 5px; }

.trades-r td .i12 {
    vertical-align: -3px;
    margin-right: 2px;
}

.tabs {
    flex: none;
    display: flex;
    align-items: flex-start;
    padding-top: 2px;
    background: #f0f0f0;
    border-top: 1px solid #333;
    font-size: 8.8px;
    color: #999;
    white-space: nowrap;
}

.tab {
    position: relative;
    flex: none;
    padding: 0 7.4px 0 7px;
    line-height: 11px;
    border-right: 1px solid #888;
}

.tab sub {
    font-size: 7.4px;
    font-weight: bold;
    color: #f43030;
    vertical-align: -3px;
    line-height: 0;
    margin-left: 1px;
}

.tabs-r {
    height: 18px;
    padding-left: 2px;
}

.tabs-r .tab.active {
    height: 16px;
    margin-top: -2px;
    line-height: 14px;
    width: 38px;
    padding: 0;
    text-align: center;
    background: #fff;
    color: #444;
    border: 1px solid #333;
    border-top: none;
}

.tabs-l {
    height: 18px;
    margin-left: -4px;
}

.status {
    flex: none;
    display: grid;
    align-items: center;
    background: #efefef;
    border-top: 2px solid #e0e0e0;
    font-size: 9px;
    color: #333;
    white-space: nowrap;
}

.status span {
    height: 100%;
    line-height: 16px;
    padding-left: 3px;
    border-right: 1px solid #c8c8c8;
}

.status-r {
    height: 19px;
    grid-template-columns: 181px 87px 77px 53px 52px 1fr;
}

.status-l {
    height: 19px;
    grid-template-columns: 84px 76px 53px 53px 51px 52px 49px 1fr;
    background: repeating-linear-gradient(135deg, #efefef 0 1px, #b4b4b4 1px 2px) right bottom / 9px 9px no-repeat, #efefef;
}

.status-l span {
    background: #efefef;
}

.status-l .conn {
    display: flex;
    align-items: center;
    gap: 3px;
    border: none;
    background: none;
}

.conn-bars {
    width: 18px;
    height: 10px;
}

.cb-g { fill: #7a9a28; }
.cb-b { fill: #1c6a8c; }
.cb-k { stroke: #efefef; stroke-width: .8; }

/* local terminal */

.local {
    position: absolute;
    left: 0;
    top: 51px;
    width: 475px;
    height: 680px;
    display: flex;
    flex-direction: column;
    background: #f0f0f0;
    border-radius: 0 5px 0 0;
    overflow: hidden;
}

.local-title {
    height: 21px;
    flex: none;
    display: flex;
    align-items: center;
    justify-content: space-between;
    padding-left: 1px;
    background: #f6f6f6;
    font-size: 8.6px;
    color: #555;
    white-space: nowrap;
}

.caps {
    display: flex;
    gap: 22px;
    padding-right: 10px;
}

.caps svg {
    width: 12px;
    height: 12px;
    fill: none;
    stroke: #333;
    stroke-width: 1;
}

.menubar-l {
    height: 17px;
    padding-left: 2px;
    gap: 14px;
    justify-content: flex-start;
}

.mdi {
    margin-left: auto;
    display: flex;
    gap: 2px;
    color: #555;
    font-size: 9px;
}

.mdi u {
    width: 12px;
    height: 12px;
    background: #fff;
    text-decoration: none;
    text-align: center;
    line-height: 12px;
}

.tb-l1 { height: 21px; }
.tb-l2 { height: 20px; }

.order-cut {
    margin-left: -7px;
    flex: none;
}

.neworder-l {
    padding: 0 2px 0 1px;
}

.notify {
    width: 13px;
    height: 13px;
    margin-left: 5px;
    background: #e02818;
    color: #fff;
    border-radius: 50%;
    font-size: 9px;
    text-align: center;
    line-height: 13px;
    box-shadow: -3px 4px 0 -1px #ccc;
}

.cut-t {
    width: 13px;
    margin-left: -4px;
}

.tb-l2 .wide { margin-left: 2px; }
.tb-l2 .sep:first-of-type { margin-right: 5px; }

.local-main {
    flex: none;
    height: 395px;
    display: flex;
}

.side-l {
    width: 60px;
    flex: none;
    display: flex;
    flex-direction: column;
    gap: 3px;
    padding-top: 3px;
}

.side-l .panel-head {
    justify-content: flex-end;
    height: 12px;
    padding-right: 3px;
    margin-right: 2px;
}

.mw-l {
    flex: none;
    height: 215px;
    padding-bottom: 18px;
}

.mw-l .mw-body {
    margin-right: 2px;
    border-left: none;
    border-top: none;
    overflow: hidden;
    background: #f0f0f0;
}

.mw-table-l {
    flex: none;
    width: 43px;
    background: #fff;
    margin-bottom: auto;
}

.mw-table-l th {
    font-size: 9px;
    padding-right: 2px;
    height: 14px;
}

.mw-table-l td {
    padding-right: 3px;
    border-right: none;
    height: 14.9px;
}

.thumb-l {
    width: 2px;
    height: 14px;
    margin: 11px 0 0 5px;
    background: #888;
}

.nav-l {
    flex: 1;
    min-height: 0;
}

.nav-body-l {
    flex: none;
    height: 142px;
    width: 44px;
    background: #fff;
    border-bottom: 1px solid #333;
}

.chart-col {
    flex: 1;
    min-width: 0;
    display: flex;
    flex-direction: column;
}

.chart-l {
    height: 378px;
    flex: none;
}

.chart-tabs {
    flex: 1;
    display: flex;
    align-items: flex-start;
    font-size: 9.4px;
    color: #aaa;
    padding-left: 3px;
    background: #f0f0f0;
    white-space: nowrap;
}

.ctab {
    padding: 2px 6px;
}

.ctab.active {
    width: 66px;
    height: 14px;
    padding: 0;
    line-height: 13px;
    text-align: center;
    background: #fff;
    color: #444;
    border: 1px solid #333;
    border-top: none;
    margin-right: 2px;
}

.ctab-arrows {
    margin-left: auto;
    display: flex;
    gap: 8px;
    padding: 2px 8px 0 0;
    font-size: 7px;
}

.ctab-arrows u {
    text-decoration: none;
    color: #aaa;
}

.term-l {
    flex: 1;
    flex-direction: column;
    min-height: 0;
    margin-top: 2px;
}
```
